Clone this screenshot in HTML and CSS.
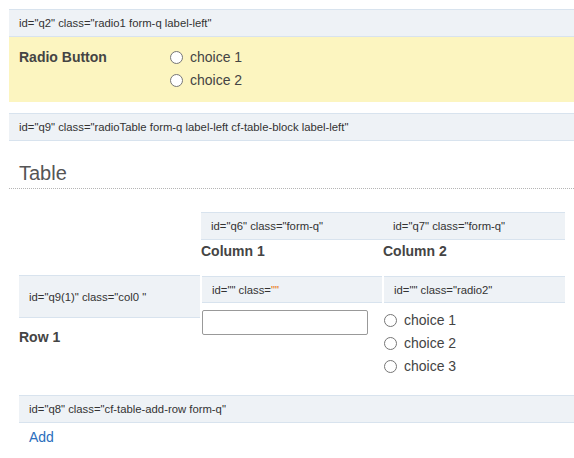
FILE: index.html
```html
<!DOCTYPE html>
<html>
<head>
<meta charset="utf-8">
<link rel="stylesheet" href="styles.css">
</head>
<body>
<div class="page">
  <div class="q">
    <div class="bar"><span>id="q2" <b>class</b>="radio1 form-q label-left"</span></div>
    <div class="radio-block">
      <div class="qlabel">Radio Button</div>
      <div class="opts">
        <label class="opt"><span class="circle"></span>choice 1</label>
        <label class="opt"><span class="circle"></span>choice 2</label>
      </div>
    </div>
  </div>

  <div class="q q9">
    <div class="bar"><span>id="q9" <b>class</b>="radioTable form-q label-left cf-table-block label-left"</span></div>
    <h2 class="heading">Table</h2>
    <div class="grid">
      <div class="cell"></div>
      <div class="cell">
        <div class="bar hbar"><span>id="q6" <b>class</b>="form-q"</span></div>
        <div class="colname">Column 1</div>
      </div>
      <div class="cell">
        <div class="bar hbar"><span>id="q7" <b>class</b>="form-q"</span></div>
        <div class="colname">Column 2</div>
      </div>

      <div class="cell">
        <div class="bar rowbar"><span>id="q9(1)" <b>class</b>="col0 "</span></div>
        <div class="rowname">Row 1</div>
      </div>
      <div class="cell">
        <div class="bar cbar"><span>id="" <b>class</b>=<span class="empty">""</span></span></div>
        <input class="text" type="text">
      </div>
      <div class="cell">
        <div class="bar cbar cbar2"><span>id="" <b>class</b>="radio2"</span></div>
        <div class="opts opts2">
          <label class="opt"><span class="circle"></span>choice 1</label>
          <label class="opt"><span class="circle"></span>choice 2</label>
          <label class="opt"><span class="circle"></span>choice 3</label>
        </div>
      </div>
    </div>
    <div class="addrow">
      <div class="bar"><span>id="q8" <b>class</b>="cf-table-add-row form-q"</span></div>
      <a class="add" href="#">Add</a>
    </div>
  </div>
</div>
</body>
</html>
```

FILE: styles.css
```css
html, body {
  margin: 0;
  padding: 0;
  background: #fff;
}
body {
  padding: 9px 0 0 9px;
  font-family: "Liberation Sans", Arial, sans-serif;
  color: #444;
}
.page {
  width: 565px;
}
.bar {
  box-sizing: border-box;
  height: 28px;
  padding: 0 10px;
  display: flex;
  align-items: center;
  font-size: 11.3px;
  color: #333;
  background: #eef2f6;
  border-top: 1px solid #d8e3ee;
  border-bottom: 1px solid #d8e3ee;
  white-space: nowrap;
}
.bar b {
  font-weight: normal;
}
.empty {
  color: #e8720c;
}
.radio-block {
  background: #fcf5c0;
  height: 65px;
  box-sizing: border-box;
  padding: 12px 10px 0 10px;
  display: flex;
}
.qlabel {
  width: 151px;
  font-size: 14px;
  font-weight: bold;
  color: #444;
  line-height: 16px;
}
.opts {
  display: flex;
  flex-direction: column;
  gap: 7px;
}
.opt {
  display: flex;
  align-items: center;
  font-size: 14px;
  line-height: 16px;
  color: #444;
}
.circle {
  box-sizing: border-box;
  width: 13px;
  height: 13px;
  border: 1px solid #767676;
  border-radius: 50%;
  background: #fff;
  margin-right: 7px;
}
.q9 {
  margin-top: 11px;
}
.heading {
  margin: 0;
  padding: 21px 10px 3px 10px;
  font-size: 20px;
  font-weight: normal;
  line-height: 23px;
  color: #555;
  border-bottom: 1px dotted #b5b5b5;
}
.grid {
  display: grid;
  grid-template-columns: 182px 182px 182px;
  padding: 23px 0 0 10px;
  row-gap: 16px;
}
.colname {
  font-size: 14px;
  font-weight: bold;
  line-height: 16px;
  padding-top: 3px;
  color: #444;
}
.rowbar {
  height: 43px;
  margin-right: 1px;
}
.rowname {
  font-size: 14px;
  font-weight: bold;
  line-height: 16px;
  padding-top: 11px;
  color: #444;
}
.cbar {
  margin: 1px 1px 0 1px;
  height: 27px;
}
.cbar2 {
  margin-left: 1px;
  margin-right: 0;
}
.text {
  display: block;
  box-sizing: border-box;
  margin: 7px 0 0 1px;
  width: 166px;
  height: 25px;
  border: 1px solid #999;
  border-radius: 2px;
  background: #fff;
  padding: 0;
}
.opts2 {
  padding-top: 9px;
}
.opts2 .circle {
  margin-left: 1px;
}
.addrow {
  margin: 21px 0 0 10px;
  width: 555px;
}
.add {
  display: block;
  margin: 6px 0 0 10px;
  font-size: 14px;
  line-height: 16px;
  color: #2a6ebd;
  text-decoration: none;
}
```
